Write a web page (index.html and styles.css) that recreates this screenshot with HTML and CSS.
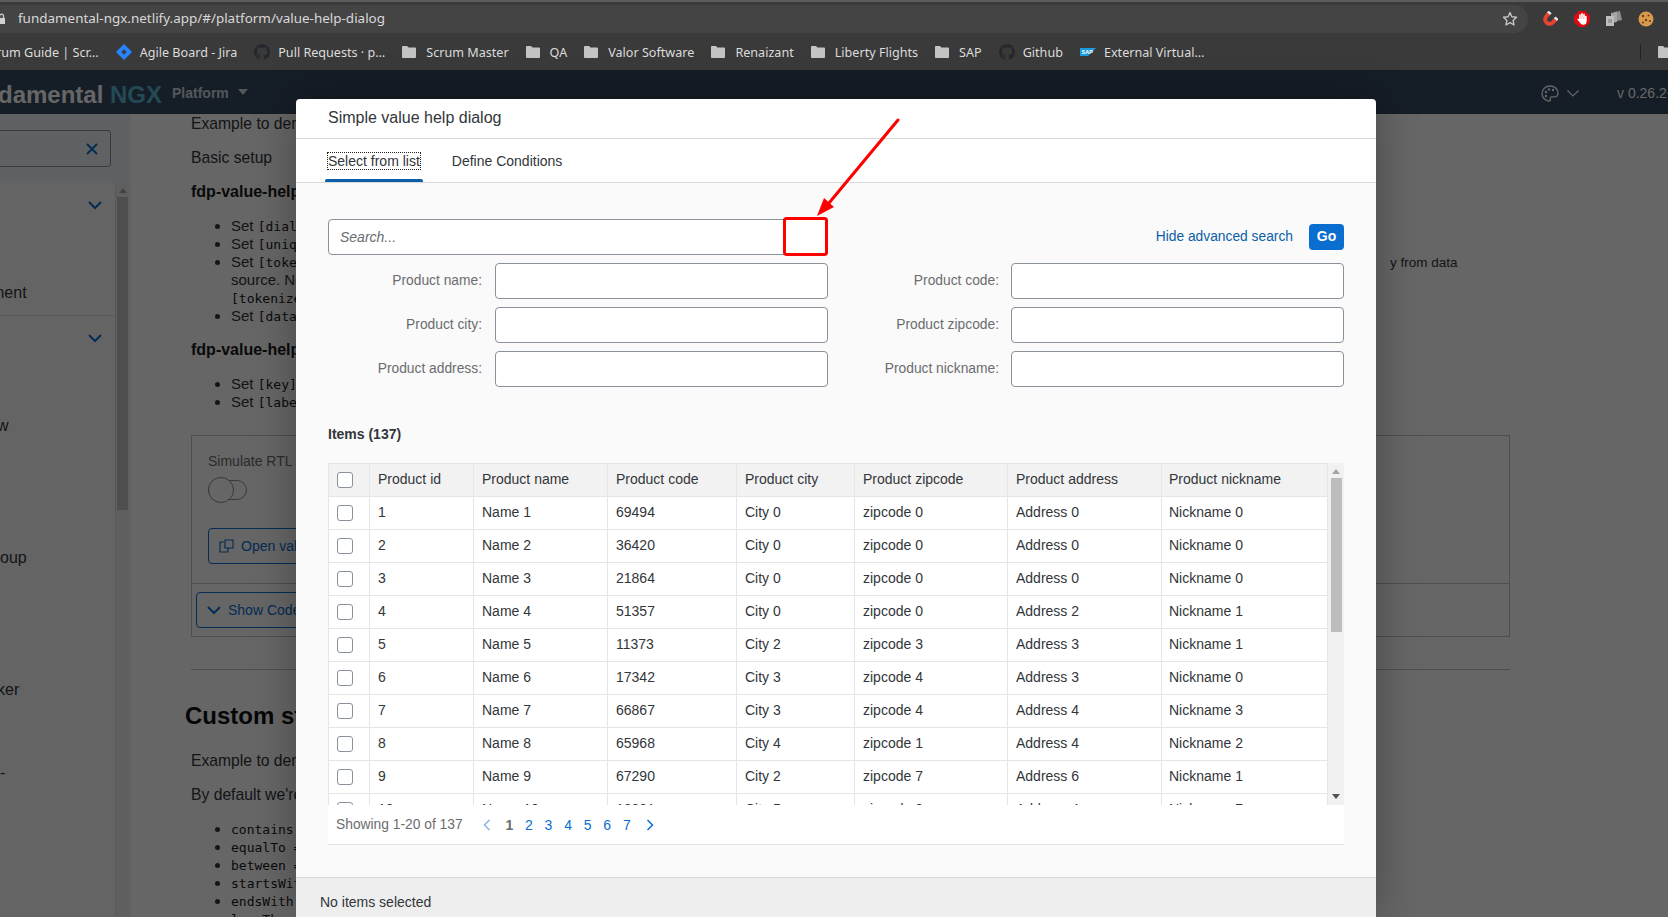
FILE: index.html
```html
<!DOCTYPE html>
<html lang="en">
<head>
<meta charset="utf-8">
<title>Value help dialog</title>
<link rel="stylesheet" href="styles.css">
</head>
<body>
<div class="browser">
  <div class="tabstrip"></div>
  <div class="toolbar">
    <div class="omnibox">
      <svg class="lock" width="8" height="12" viewBox="0 0 8 12"><path d="M0 5h7v6H0z" fill="#d0d0d0"/><path d="M1.5 5V3.2a2 2 0 0 1 4 0V5" fill="none" stroke="#d0d0d0" stroke-width="1.3"/></svg>
      <span class="url">fundamental-ngx.netlify.app/#/platform/value-help-dialog</span>
      <svg class="star" width="16" height="16" viewBox="0 0 16 16"><path d="M8 1.6l1.9 4.2 4.6.5-3.4 3.1.9 4.6L8 11.7 4 14l.9-4.6L1.5 6.3l4.6-.5z" fill="none" stroke="#c4c4c4" stroke-width="1.4" stroke-linejoin="round"/></svg>
    </div>
    <div class="extensions">
      <svg width="16" height="16" viewBox="0 0 16 16"><g transform="rotate(40 8 8)"><path d="M1.500 5v3.500a6.500 6.500 0 0 0 13 0V5h-4v3.500a2.500 2.500 0 0 1-5 0V5z" fill="#e8432e"/><path d="M1.500 2.500h4V5h-4z" fill="#e6e6e6"/><path d="M10.500 2.500h4V5h-4z" fill="#e6e6e6"/></g></svg>
      <svg width="16" height="16" viewBox="0 0 16 16"><path d="M5 0h6l5 5v6l-5 5H5l-5-5V5z" fill="#e0070f"/><path d="M6 8.500V4M8 8V2.800M10 8V3.500M11.800 9V5.500" stroke="#fff" stroke-width="1.700" stroke-linecap="round" fill="none"/><path d="M5 8h7.600v2.500c0 2-1.300 3.300-3.300 3.300-1.700 0-2.600-.7-3.300-2L3.500 8.800c-.4-.9.700-1.400 1.300-.7z" fill="#fff"/></svg>
      <svg width="16" height="16" viewBox="0 0 16 16"><path d="M8 1l6-1 2 9-5 1z" fill="#8f8f8f"/><path d="M5 2l6-1v10l-6 1z" fill="#a6a6a6"/><path d="M0 5h8v10H0z" fill="#bdbdbd"/><path d="M2 8h4v4H2z" fill="#9a9a9a"/></svg>
      <svg width="16" height="16" viewBox="0 0 16 16"><circle cx="8" cy="8" r="7.500" fill="#d99a4e"/><circle cx="5" cy="5" r="1.200" fill="#6b3d16"/><circle cx="10.500" cy="4.500" r="1" fill="#6b3d16"/><circle cx="8" cy="9" r="1.200" fill="#6b3d16"/><circle cx="12" cy="10" r="1.100" fill="#6b3d16"/><circle cx="5" cy="11.500" r="1" fill="#6b3d16"/></svg>
    </div>
  </div>
  <div class="bookmarks">
    <span class="bm bm-first">rum Guide | Scr…</span>
    <span class="bm"><svg width="16" height="16" viewBox="0 0 16 16"><path d="M8 0l8 8-8 8-8-8z" fill="#2684ff"/><path d="M8 5.300L10.700 8 8 10.700 5.300 8z" fill="#3b3b3b"/></svg>Agile Board - Jira</span>
    <span class="bm"><svg class="gh" width="16" height="16" viewBox="0 0 16 16"><path d="M8 0C3.580 0 0 3.580 0 8c0 3.540 2.290 6.530 5.470 7.590.4.070.55-.17.55-.38 0-.19-.010-.82-.010-1.490-2.010.370-2.530-.490-2.690-.940-.090-.230-.480-.940-.820-1.130-.280-.150-.680-.520-.010-.530.630-.010 1.080.580 1.230.820.720 1.210 1.870.870 2.330.660.070-.520.280-.870.510-1.070-1.780-.200-3.640-.890-3.640-3.950 0-.870.310-1.590.820-2.150-.080-.200-.360-1.020.080-2.120 0 0 .670-.210 2.200.820.640-.180 1.320-.270 2-.270s1.360.090 2 .270c1.530-1.040 2.200-.820 2.200-.820.440 1.100.160 1.920.080 2.120.510.560.820 1.270.820 2.150 0 3.070-1.870 3.750-3.650 3.950.290.250.540.730.540 1.480 0 1.070-.010 1.930-.010 2.200 0 .210.150.460.550.380A8.010 8.010 0 0 0 16 8c0-4.420-3.580-8-8-8z"/></svg>Pull Requests · p…</span>
    <span class="bm"><svg class="folder" width="14" height="12" viewBox="0 0 14 12"><path d="M0 1a1 1 0 0 1 1-1h4l1.500 1.500H13a1 1 0 0 1 1 1V11a1 1 0 0 1-1 1H1a1 1 0 0 1-1-1z"/></svg>Scrum Master</span>
    <span class="bm"><svg class="folder" width="14" height="12" viewBox="0 0 14 12"><path d="M0 1a1 1 0 0 1 1-1h4l1.500 1.500H13a1 1 0 0 1 1 1V11a1 1 0 0 1-1 1H1a1 1 0 0 1-1-1z"/></svg>QA</span>
    <span class="bm"><svg class="folder" width="14" height="12" viewBox="0 0 14 12"><path d="M0 1a1 1 0 0 1 1-1h4l1.500 1.500H13a1 1 0 0 1 1 1V11a1 1 0 0 1-1 1H1a1 1 0 0 1-1-1z"/></svg>Valor Software</span>
    <span class="bm"><svg class="folder" width="14" height="12" viewBox="0 0 14 12"><path d="M0 1a1 1 0 0 1 1-1h4l1.500 1.500H13a1 1 0 0 1 1 1V11a1 1 0 0 1-1 1H1a1 1 0 0 1-1-1z"/></svg>Renaizant</span>
    <span class="bm"><svg class="folder" width="14" height="12" viewBox="0 0 14 12"><path d="M0 1a1 1 0 0 1 1-1h4l1.500 1.500H13a1 1 0 0 1 1 1V11a1 1 0 0 1-1 1H1a1 1 0 0 1-1-1z"/></svg>Liberty Flights</span>
    <span class="bm"><svg class="folder" width="14" height="12" viewBox="0 0 14 12"><path d="M0 1a1 1 0 0 1 1-1h4l1.500 1.500H13a1 1 0 0 1 1 1V11a1 1 0 0 1-1 1H1a1 1 0 0 1-1-1z"/></svg>SAP</span>
    <span class="bm"><svg class="gh" width="16" height="16" viewBox="0 0 16 16"><path d="M8 0C3.580 0 0 3.580 0 8c0 3.540 2.290 6.530 5.470 7.590.4.070.55-.17.55-.38 0-.19-.010-.82-.010-1.490-2.010.370-2.530-.490-2.690-.940-.090-.230-.480-.940-.820-1.130-.280-.150-.680-.520-.010-.530.630-.010 1.080.580 1.230.820.720 1.210 1.870.870 2.330.660.070-.520.280-.870.510-1.070-1.780-.200-3.640-.890-3.640-3.950 0-.870.310-1.590.820-2.150-.080-.200-.360-1.020.080-2.120 0 0 .670-.210 2.200.820.640-.180 1.320-.270 2-.270s1.360.090 2 .270c1.530-1.040 2.200-.820 2.200-.820.440 1.100.160 1.920.080 2.120.510.560.820 1.270.820 2.150 0 3.070-1.870 3.750-3.650 3.950.290.250.540.730.540 1.480 0 1.070-.010 1.930-.010 2.200 0 .210.150.460.550.380A8.010 8.010 0 0 0 16 8c0-4.420-3.580-8-8-8z"/></svg>Github</span>
    <span class="bm"><svg width="16" height="8" viewBox="0 0 16 8"><path d="M0 0h16L8 8H0z" fill="#1b9be0"/><text x="1.500" y="6" font-size="5.500" font-weight="700" fill="#fff" font-family="Liberation Sans">SAP</text></svg>External Virtual…</span>
    <span class="bm-sep"></span>
    <svg class="folder folder-end" width="14" height="12" viewBox="0 0 14 12"><path d="M0 1a1 1 0 0 1 1-1h4l1.500 1.500H13a1 1 0 0 1 1 1V11a1 1 0 0 1-1 1H1a1 1 0 0 1-1-1z"/></svg>
  </div>
</div>

<div class="viewport">
  <header class="shell">
    <span class="brand">Fundamental <b class="ngx">NGX</b></span>
    <span class="product">Platform</span>
    <span class="caret"></span>
    <span class="shell-right">
      <svg width="18" height="17" viewBox="0 0 18 17"><path d="M9 1C4.500 1 1 4.300 1 8.500S4.500 16 8 16c1.500 0 1.800-1 1.300-2-.5-1.200.3-2.200 1.700-2.200h2.500c2 0 3.500-1.300 3.500-3.500C17 4 13.500 1 9 1z" fill="none" stroke="#6d7780" stroke-width="1.300"/><circle cx="5" cy="7" r="1.200" fill="#6d7780"/><circle cx="8" cy="4.500" r="1.200" fill="#6d7780"/><circle cx="12" cy="5" r="1.200" fill="#6d7780"/><circle cx="5" cy="11" r="1.200" fill="#6d7780"/></svg>
      <svg class="shell-chev" width="12" height="7" viewBox="0 0 12 7"><path d="M.5.500L6 6l5.500-5.500" fill="none" stroke="#6d7780" stroke-width="1.200"/></svg>
      <span class="version">v 0.26.2-rc.42</span>
    </span>
  </header>
  <div class="app">
    <aside class="sidebar">
      <div class="side-top">
        <div class="side-search">
          <svg width="12" height="12" viewBox="0 0 12 12"><path d="M1 1l10 10M11 1L1 11" stroke="#0a6ed1" stroke-width="2"/></svg>
        </div>
      </div>
      <div class="side-body">
        <nav class="side-list">
          <div class="nav-row"><svg class="nav-chev" width="14" height="9" viewBox="0 0 14 9"><path d="M1 1l6 6 6-6" fill="none" stroke="#0a6ed1" stroke-width="2"/></svg></div>
          <div class="nav-row"></div>
          <div class="nav-row nav-last trim-l">ment</div>
          <div class="nav-row"><svg class="nav-chev" width="14" height="9" viewBox="0 0 14 9"><path d="M1 1l6 6 6-6" fill="none" stroke="#0a6ed1" stroke-width="2"/></svg></div>
          <div class="nav-row"></div>
          <div class="nav-row trim-s">w</div>
          <div class="nav-row"></div>
          <div class="nav-row"></div>
          <div class="nav-row">oup</div>
          <div class="nav-row"></div>
          <div class="nav-row"></div>
          <div class="nav-row trim-s">ker</div>
          <div class="nav-row nav-short"></div>
          <div class="nav-row">-</div>
        </nav>
        <div class="side-scroll"><span class="side-up"></span><span class="side-thumb"></span></div>
      </div>
    </aside>
    <main class="content">
      <p class="para">Example to demonstrate the value help dialog</p>
      <p class="para">Basic setup</p>
      <h4 class="sub">fdp-value-help-dialog</h4>
      <ul class="list">
        <li>Set <code>[dialogTitle]</code></li>
        <li>Set <code>[uniqueKey]</code></li>
        <li class="li-wide">Set <code>[tokenViewField]</code><span class="tail">y from data</span></li>
        <li class="li-cont">source. Note</li>
        <li class="li-cont"><code>[tokenizer]</code></li>
        <li>Set <code>[dataSource]</code></li>
      </ul>
      <h4 class="sub sub-2">fdp-value-help-dialog-column</h4>
      <ul class="list">
        <li>Set <code>[key]</code></li>
        <li>Set <code>[label]</code></li>
      </ul>
      <section class="example">
        <div class="example-main">
          <div class="rtl-label">Simulate RTL</div>
          <div class="toggle"><span class="knob"></span></div>
          <button class="ghost open-btn"><svg width="15" height="14" viewBox="0 0 15 14"><path d="M5 3H1v10h8V9M6 1h8v8H6z" fill="none" stroke="#0a6ed1" stroke-width="1.200"/></svg>Open value help</button>
        </div>
        <div class="example-foot">
          <button class="ghost"><svg width="14" height="9" viewBox="0 0 14 9"><path d="M1 1l6 6 6-6" fill="none" stroke="#0a6ed1" stroke-width="2"/></svg>Show Code</button>
        </div>
      </section>
      <hr class="rule">
      <h2 class="section-title">Custom strategy</h2>
      <p class="para para-b">Example to demonstrate custom strategy</p>
      <p class="para">By default we're using</p>
      <ul class="list list-mono">
        <li><code>contains</code></li>
        <li><code>equalTo =</code></li>
        <li><code>between =</code></li>
        <li><code>startsWith</code></li>
        <li><code>endsWith</code></li>
        <li><code>lessThan</code></li>
      </ul>
    </main>
  </div>
</div>

<div class="backdrop"></div>

<div class="dialog">
  <div class="dlg-title">Simple value help dialog</div>
  <div class="dlg-tabs">
    <span class="tab tab-active"><span class="tab-focus">Select from list</span></span>
    <span class="tab">Define Conditions</span>
  </div>
  <div class="dlg-body">
    <div class="search-row">
      <input class="field search" type="text" placeholder="Search...">
      <a class="adv-link">Hide advanced search</a>
      <button class="go">Go</button>
    </div>
    <div class="filter-grid">
      <label class="lbl">Product name:</label><input class="field" type="text">
      <label class="lbl lbl-r">Product code:</label><input class="field" type="text">
      <label class="lbl">Product city:</label><input class="field" type="text">
      <label class="lbl lbl-r">Product zipcode:</label><input class="field" type="text">
      <label class="lbl">Product address:</label><input class="field" type="text">
      <label class="lbl lbl-r">Product nickname:</label><input class="field" type="text">
    </div>
    <div class="items-title">Items (137)</div>
    <div class="table-wrap">
      <table class="grid">
        <colgroup><col class="c0"><col class="c1"><col class="c2"><col class="c3"><col class="c4"><col class="c5"><col class="c6"><col class="c7"></colgroup>
        <thead>
          <tr><th><span class="check"></span></th><th>Product id</th><th>Product name</th><th>Product code</th><th>Product city</th><th>Product zipcode</th><th>Product address</th><th>Product nickname</th></tr>
        </thead>
        <tbody>
          <tr><td><span class="check"></span></td><td>1</td><td>Name 1</td><td>69494</td><td>City 0</td><td>zipcode 0</td><td>Address 0</td><td>Nickname 0</td></tr>
          <tr><td><span class="check"></span></td><td>2</td><td>Name 2</td><td>36420</td><td>City 0</td><td>zipcode 0</td><td>Address 0</td><td>Nickname 0</td></tr>
          <tr><td><span class="check"></span></td><td>3</td><td>Name 3</td><td>21864</td><td>City 0</td><td>zipcode 0</td><td>Address 0</td><td>Nickname 0</td></tr>
          <tr><td><span class="check"></span></td><td>4</td><td>Name 4</td><td>51357</td><td>City 0</td><td>zipcode 0</td><td>Address 2</td><td>Nickname 1</td></tr>
          <tr><td><span class="check"></span></td><td>5</td><td>Name 5</td><td>11373</td><td>City 2</td><td>zipcode 3</td><td>Address 3</td><td>Nickname 1</td></tr>
          <tr><td><span class="check"></span></td><td>6</td><td>Name 6</td><td>17342</td><td>City 3</td><td>zipcode 4</td><td>Address 3</td><td>Nickname 0</td></tr>
          <tr><td><span class="check"></span></td><td>7</td><td>Name 7</td><td>66867</td><td>City 3</td><td>zipcode 4</td><td>Address 4</td><td>Nickname 3</td></tr>
          <tr><td><span class="check"></span></td><td>8</td><td>Name 8</td><td>65968</td><td>City 4</td><td>zipcode 1</td><td>Address 4</td><td>Nickname 2</td></tr>
          <tr><td><span class="check"></span></td><td>9</td><td>Name 9</td><td>67290</td><td>City 2</td><td>zipcode 7</td><td>Address 6</td><td>Nickname 1</td></tr>
          <tr><td><span class="check"></span></td><td>10</td><td>Name 10</td><td>18301</td><td>City 5</td><td>zipcode 0</td><td>Address 4</td><td>Nickname 7</td></tr>
        </tbody>
      </table>
      <div class="vscroll"><span class="v-up"></span><span class="v-thumb"></span><span class="v-down"></span></div>
    </div>
    <div class="pager">
      <span class="showing">Showing 1-20 of 137</span>
      <svg class="pg-prev" width="8" height="12" viewBox="0 0 8 12"><path d="M6.500 1L1.500 6l5 5" fill="none" stroke="#0a6ed1" stroke-opacity=".5" stroke-width="1.500"/></svg>
      <span class="pg pg-cur">1</span><span class="pg">2</span><span class="pg">3</span><span class="pg">4</span><span class="pg">5</span><span class="pg">6</span><span class="pg">7</span>
      <svg class="pg-next" width="8" height="12" viewBox="0 0 8 12"><path d="M1.500 1l5 5-5 5" fill="none" stroke="#0a6ed1" stroke-width="1.500"/></svg>
    </div>
  </div>
  <div class="dlg-foot">No items selected</div>
</div>

<svg class="annotation" width="1668" height="917" viewBox="0 0 1668 917">
  <path d="M898 120L829 203" stroke="#ff0000" stroke-width="3" stroke-linecap="round"/>
  <path d="M817 216L824 198L834 207z" fill="#ff0000"/>
  <rect x="784.500" y="218.500" width="42" height="36" rx="2" fill="#fff" stroke="#ff0000" stroke-width="3"/>
</svg>
</body>
</html>
```
FILE: styles.css
```css
* { box-sizing: border-box; }
html, body { margin: 0; height: 100%; }
body {
  width: 1668px;
  height: 917px;
  overflow: hidden;
  position: relative;
  display: flex;
  flex-direction: column;
  font-family: "Liberation Sans", Arial, sans-serif;
  font-size: 14px;
  color: #32363a;
  background: #fff;
}

/* browser chrome */
.browser { flex: none; height: 70px; background: #3a3a3a; font-family: "Noto Sans", sans-serif; color: #dcdcdc; }
.tabstrip { height: 2px; background: #5c5c5c; }
.toolbar { height: 31px; padding-top: 3px; display: flex; align-items: stretch; }
.omnibox {
  width: 1528px;
  height: 28px;
  background: #444;
  border-radius: 0 14px 14px 0;
  display: flex;
  align-items: center;
  padding-right: 10px;
}
.lock { flex: none; margin-left: -2px; }
.url { margin-left: 12px; padding-bottom: 2px; font-size: 13.450px; color: #d8d8d8; white-space: nowrap; }
.star { margin-left: auto; }
.extensions { display: flex; align-items: center; gap: 16px; padding-left: 14px; }
.bookmarks { height: 37px; padding-top: 1px; display: flex; align-items: center; gap: 17px; font-size: 12.600px; white-space: nowrap; }
.bm { display: flex; align-items: center; gap: 8px; flex: none; }
.bm svg { flex: none; }
.bm-first { margin-left: -4px; }
.folder { fill: #c4c4c4; flex: none; margin-right: 2px; }
.gh { fill: #25292d; }
.bm-sep { width: 1px; height: 16px; background: #222; margin-left: auto; }
.folder-end { margin-right: -4px; }

/* app below */
.viewport { flex: 1; min-height: 0; display: flex; flex-direction: column; overflow: hidden; }
.shell { flex: none; height: 44px; background: #354a5f; display: flex; align-items: center; color: #fff; white-space: nowrap; }
.brand { margin-left: -46px; padding-top: 6px; font-size: 24px; font-weight: 700; flex: none; }
.ngx { color: #5bb7d5; font-weight: 700; }
.product { margin-left: 10px; padding-top: 2px; font-weight: 700; font-size: 14px; color: #d1d9e0; flex: none; }
.caret { margin-left: 9px; flex: none; width: 0; height: 0; border-left: 5px solid transparent; border-right: 5px solid transparent; border-top: 6px solid #d1d9e0; }
.shell-right { margin-left: auto; padding-top: 2px; display: flex; align-items: center; flex: none; }
.shell-chev { margin-left: 8px; }
.version { width: 51px; margin-left: 38px; overflow: hidden; font-size: 14px; color: #fff; }
.shell-right svg path, .shell-right svg circle { filter: brightness(2.4); }

.app { flex: 1; min-height: 0; display: flex; }
.sidebar { flex: none; width: 131px; background: #f0f2f4; display: flex; flex-direction: column; overflow: hidden; }
.side-top { flex: none; padding: 16px 20px 16px 0; }
.side-search { height: 37px; margin-left: -10px; border: 1px solid #89919a; border-radius: 3px; background: #f0f2f4; display: flex; align-items: center; justify-content: flex-end; padding-right: 12px; }
.side-body { flex: 1; min-height: 0; display: flex; }
.side-list { flex: none; width: 116px; background: #fafafa; border-right: 1px solid #dcdcdc; font-size: 16px; }
.nav-row { height: 44px; display: flex; align-items: center; justify-content: space-between; padding-right: 13px; }
.nav-chev { margin-left: auto; }
.nav-last { height: 45px; border-bottom: 1px solid #dcdcdc; }
.nav-short { height: 39px; }
.trim-l { text-indent: -9px; }
.trim-s { text-indent: -3px; }
.side-scroll { flex: none; width: 13px; display: flex; flex-direction: column; align-items: center; padding-top: 5px; background: #ededed; }
.side-up { width: 0; height: 0; border-left: 4px solid transparent; border-right: 4px solid transparent; border-bottom: 5px solid #aaa; }
.side-thumb { width: 11px; height: 313px; margin-top: 4px; background: #c4c4c4; }

.content { flex: 1; min-width: 0; padding-left: 60px; font-size: 15.700px; color: #32363a; white-space: nowrap; }
.para { margin: 0 0 14px; height: 20px; line-height: 20px; }
.sub { margin: 0; height: 20px; line-height: 20px; font-size: 16px; font-weight: 700; color: #1a1a1a; }
.sub-2 { margin-top: 15px; }
.list { margin: 15px 0 0; padding: 0 0 0 40px; font-size: 15px; line-height: 18px; color: #32363a; }
.list li { height: 18px; }
.list code { font-family: "DejaVu Sans Mono", monospace; font-size: 13px; line-height: 1; color: #1a1a1a; }
.li-cont { list-style: none; }
.tail { margin-left: 1007px; font-size: 13.500px; }
.example { margin-top: 24px; width: 1319px; height: 202px; border: 1px solid #c4c4c4; display: flex; flex-direction: column; }
.example-main { height: 148px; padding: 15px 16px 0; border-bottom: 1px solid #c4c4c4; }
.rtl-label { font-size: 14px; height: 20px; line-height: 20px; color: #6a6d70; }
.toggle { margin-top: 9px; width: 39px; height: 20px; border: 1px solid #89919a; border-radius: 10px; position: relative; }
.knob { position: absolute; left: -1px; top: -4px; width: 26px; height: 26px; border-radius: 50%; border: 1px solid #89919a; background: #fff; }
.ghost { height: 36px; padding: 0 10px; display: flex; align-items: center; gap: 7px; border: 1px solid #0a6ed1; border-radius: 4px; background: #fff; color: #0a6ed1; font: 14px "Liberation Sans", sans-serif; white-space: nowrap; }
.open-btn { margin-top: 28px; }
.example-foot { padding: 8px 4px; }
.rule { margin: 32px 0 0; width: 1319px; border: 0; border-top: 1px solid #c4c4c4; height: 1px; }
.section-title { margin: 32px 0 0 -6px; height: 28px; line-height: 28px; font-size: 24px; font-weight: 700; color: #111; }
.para-b { margin-top: 21px; }
.list-mono { margin-top: 15px; }

/* overlay */
.backdrop { position: absolute; left: 0; right: 0; top: 70px; bottom: 0; background: rgba(0,0,0,.6); }
.dialog {
  position: absolute;
  left: 296px;
  top: 99px;
  width: 1080px;
  height: 818px;
  display: flex;
  flex-direction: column;
  background: #fff;
  border-radius: 4px 4px 0 0;
  box-shadow: 0 0 44px rgba(0,0,0,.3);
}
.dlg-title { flex: none; height: 40px; padding: 0 0 2px 32px; display: flex; align-items: center; font-size: 16px; border-bottom: 1px solid #d9d9d9; }
.dlg-tabs { flex: none; height: 44px; padding-left: 29px; display: flex; align-items: stretch; gap: 26px; border-bottom: 1px solid #d9d9d9; }
.tab { padding: 0 3px; display: flex; align-items: center; height: 43px; position: relative; }
.tab-active::after { content: ""; position: absolute; left: 0; right: 0; bottom: 0; height: 3px; background: #0a5ea8; border-radius: 2px 2px 0 0; }
.tab-focus { outline: 1px dotted #222; line-height: 16px; }
.dlg-body { flex: 1; min-height: 0; background: #fafafa; padding: 36px 32px 0; }
.field { display: block; height: 36px; border: 1px solid #89919a; border-radius: 4px; background: #fff; padding: 0 11px; font: 14px "Liberation Sans", sans-serif; color: #32363a; min-width: 0; width: 100%; outline: none; }
.search-row { display: flex; align-items: center; }
.search { flex: none; width: 500px; font-style: italic; }
.search::placeholder { color: #6a6d70; opacity: 1; }
.adv-link { margin-left: auto; padding-bottom: 2px; color: #0a5ea8; font-size: 13.800px; white-space: nowrap; }
.go { margin-left: 16px; width: 35px; height: 26px; padding: 0 0 2px; border: 0; border-radius: 4px; background: #0a6ed1; color: #fff; font: 700 14px "Liberation Sans", sans-serif; }
.filter-grid { margin-top: 8px; display: grid; grid-template-columns: 167px 333px 183px 333px; grid-auto-rows: 36px; row-gap: 8px; }
.lbl { padding-right: 13px; padding-bottom: 2px; display: flex; align-items: center; justify-content: flex-end; color: #6a6d70; white-space: nowrap; font-size: 13.800px; }
.lbl-r { padding-right: 12px; }
.items-title { margin-top: 37px; height: 20px; line-height: 20px; font-weight: 700; color: #32363a; }
.table-wrap { margin-top: 19px; width: 1016px; height: 342px; display: flex; overflow: hidden; }
.grid { flex: none; width: 1000px; table-layout: fixed; border-collapse: separate; border-spacing: 0; align-self: flex-start; }
.c0 { width: 42px; } .c1 { width: 104px; } .c2 { width: 134px; } .c3 { width: 129px; }
.c4 { width: 118px; } .c5 { width: 153px; } .c6 { width: 154px; } .c7 { width: 166px; }
.grid th, .grid td { padding: 0 0 2px 8px; text-align: left; font-weight: 400; white-space: nowrap; border-right: 1px solid #e5e5e5; border-bottom: 1px solid #e5e5e5; color: #32363a; }
.grid th { height: 34px; background: #f2f2f2; border-top: 1px solid #e5e5e5; }
.grid td { height: 33px; background: #fff; }
.grid th:first-child, .grid td:first-child { border-left: 1px solid #e5e5e5; padding: 0 0 0 8px; }
.grid th:last-child, .grid td:last-child { padding-left: 7px; }
.check { display: block; width: 16px; height: 16px; background: #fff; border: 1px solid #89919a; border-radius: 3px; }
.vscroll { flex: none; width: 16px; background: #f1f1f1; display: flex; flex-direction: column; align-items: center; padding-top: 6px; position: relative; }
.v-up { width: 0; height: 0; border-left: 4px solid transparent; border-right: 4px solid transparent; border-bottom: 5px solid #a3a3a3; }
.v-thumb { width: 11px; height: 154px; margin-top: 4px; background: #bdbdbd; }
.v-down { margin-top: auto; margin-bottom: 6px; width: 0; height: 0; border-left: 4px solid transparent; border-right: 4px solid transparent; border-top: 5px solid #505050; }
.pager { width: 1016px; height: 40px; padding: 0 0 0 8px; display: flex; align-items: center; background: #fff; border-bottom: 1px solid #e5e5e5; color: #6a6d70; }
.showing { flex: none; width: 147px; white-space: nowrap; font-size: 13.800px; }
.pg-prev { flex: none; }
.pg { flex: none; width: 19.600px; text-align: center; color: #0a6ed1; }
.pg-cur { margin-left: 8.500px; color: #6a6d70; font-weight: 700; }
.pg-next { margin-left: 9px; flex: none; }
.dlg-foot { flex: none; height: 40px; padding: 8px 0 0 24px; display: flex; align-items: center; background: #eee; border-top: 1px solid #d9d9d9; }
.annotation { position: absolute; left: 0; top: 0; pointer-events: none; }
```
